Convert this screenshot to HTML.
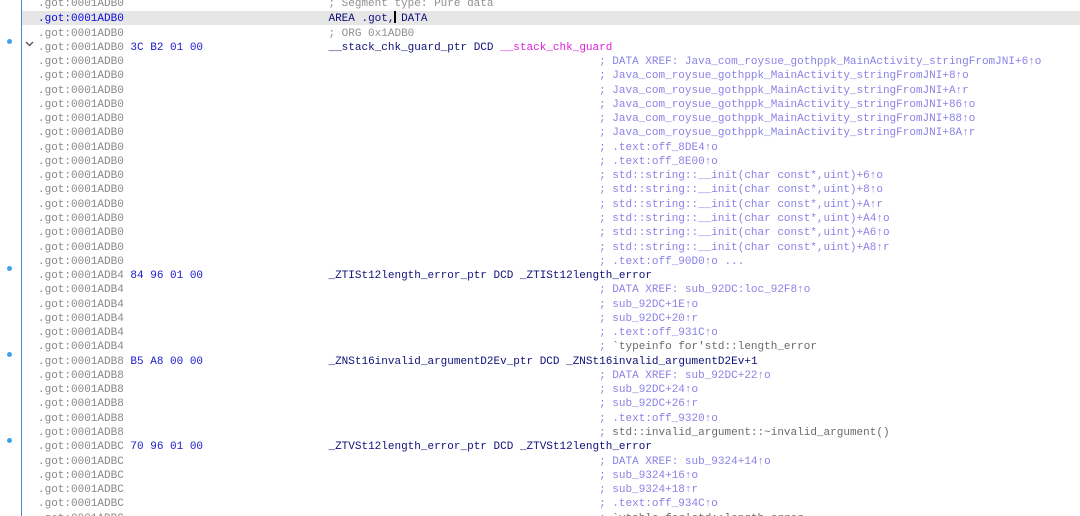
<!DOCTYPE html>
<html><head><meta charset="utf-8"><style>
html,body{margin:0;padding:0;background:#fff;width:1080px;height:516px;overflow:hidden;position:relative}
.vl{position:absolute;left:21px;top:0;width:1px;height:516px;background:#4f86c6}
.dot{position:absolute;left:7px;width:5px;height:5px;border-radius:50%;background:#3ea2ea}
.hl{position:absolute;left:22px;right:0;top:11px;height:14px;background:#e6e6e6}
pre{position:absolute;left:38px;top:-3px;margin:0;font-family:"Liberation Mono",monospace;font-size:11px;line-height:14.27px;color:#888;white-space:pre}
.a{color:#0a0ae0}.b{color:#1a1ad0}.n{color:#10107a}.m{color:#e020e0}.c{color:#8c82e6}.g{color:#909090}.d{color:#6a6a6a}
.cur{display:inline-block;width:2px;height:12px;background:#000;vertical-align:-2px;margin-right:-2px}
.chev{position:absolute;left:25px;top:40px}
</style></head><body>
<div class="vl"></div>
<div class="hl"></div>
<div class="dot" style="top:39px"></div>
<div class="dot" style="top:266px"></div>
<div class="dot" style="top:352px"></div>
<div class="dot" style="top:438px"></div>
<svg class="chev" width="9" height="8" viewBox="0 0 9 8"><path d="M1 2 L4.5 5.5 L8 2" fill="none" stroke="#555" stroke-width="1.4"/></svg>
<pre>.got:0001ADB0                               <span class="g">; Segment type: Pure data</span>
<span class="a">.got:0001ADB0</span>                               <span class="n">AREA .got,<span class="cur"></span> DATA</span>
.got:0001ADB0                               <span class="g">; ORG 0x1ADB0</span>
.got:0001ADB0 <span class="b">3C B2 01 00</span>                   <span class="n">__stack_chk_guard_ptr DCD </span><span class="m">__stack_chk_guard</span>
.got:0001ADB0                                                                        <span class="c">; DATA XREF: Java_com_roysue_gothppk_MainActivity_stringFromJNI+6↑o</span>
.got:0001ADB0                                                                        <span class="c">; Java_com_roysue_gothppk_MainActivity_stringFromJNI+8↑o</span>
.got:0001ADB0                                                                        <span class="c">; Java_com_roysue_gothppk_MainActivity_stringFromJNI+A↑r</span>
.got:0001ADB0                                                                        <span class="c">; Java_com_roysue_gothppk_MainActivity_stringFromJNI+86↑o</span>
.got:0001ADB0                                                                        <span class="c">; Java_com_roysue_gothppk_MainActivity_stringFromJNI+88↑o</span>
.got:0001ADB0                                                                        <span class="c">; Java_com_roysue_gothppk_MainActivity_stringFromJNI+8A↑r</span>
.got:0001ADB0                                                                        <span class="c">; .text:off_8DE4↑o</span>
.got:0001ADB0                                                                        <span class="c">; .text:off_8E00↑o</span>
.got:0001ADB0                                                                        <span class="c">; std::string::__init(char const*,uint)+6↑o</span>
.got:0001ADB0                                                                        <span class="c">; std::string::__init(char const*,uint)+8↑o</span>
.got:0001ADB0                                                                        <span class="c">; std::string::__init(char const*,uint)+A↑r</span>
.got:0001ADB0                                                                        <span class="c">; std::string::__init(char const*,uint)+A4↑o</span>
.got:0001ADB0                                                                        <span class="c">; std::string::__init(char const*,uint)+A6↑o</span>
.got:0001ADB0                                                                        <span class="c">; std::string::__init(char const*,uint)+A8↑r</span>
.got:0001ADB0                                                                        <span class="c">; .text:off_90D0↑o ...</span>
.got:0001ADB4 <span class="b">84 96 01 00</span>                   <span class="n">_ZTISt12length_error_ptr DCD _ZTISt12length_error</span>
.got:0001ADB4                                                                        <span class="c">; DATA XREF: sub_92DC:loc_92F8↑o</span>
.got:0001ADB4                                                                        <span class="c">; sub_92DC+1E↑o</span>
.got:0001ADB4                                                                        <span class="c">; sub_92DC+20↑r</span>
.got:0001ADB4                                                                        <span class="c">; .text:off_931C↑o</span>
.got:0001ADB4                                                                        <span class="c">;</span><span class="d"> `typeinfo for'std::length_error</span>
.got:0001ADB8 <span class="b">B5 A8 00 00</span>                   <span class="n">_ZNSt16invalid_argumentD2Ev_ptr DCD _ZNSt16invalid_argumentD2Ev+1</span>
.got:0001ADB8                                                                        <span class="c">; DATA XREF: sub_92DC+22↑o</span>
.got:0001ADB8                                                                        <span class="c">; sub_92DC+24↑o</span>
.got:0001ADB8                                                                        <span class="c">; sub_92DC+26↑r</span>
.got:0001ADB8                                                                        <span class="c">; .text:off_9320↑o</span>
.got:0001ADB8                                                                        <span class="c">;</span><span class="d"> std::invalid_argument::~invalid_argument()</span>
.got:0001ADBC <span class="b">70 96 01 00</span>                   <span class="n">_ZTVSt12length_error_ptr DCD _ZTVSt12length_error</span>
.got:0001ADBC                                                                        <span class="c">; DATA XREF: sub_9324+14↑o</span>
.got:0001ADBC                                                                        <span class="c">; sub_9324+16↑o</span>
.got:0001ADBC                                                                        <span class="c">; sub_9324+18↑r</span>
.got:0001ADBC                                                                        <span class="c">; .text:off_934C↑o</span>
.got:0001ADBC                                                                        <span class="c">;</span><span class="d"> `vtable for'std::length_error</span>
</pre>
</body></html>
